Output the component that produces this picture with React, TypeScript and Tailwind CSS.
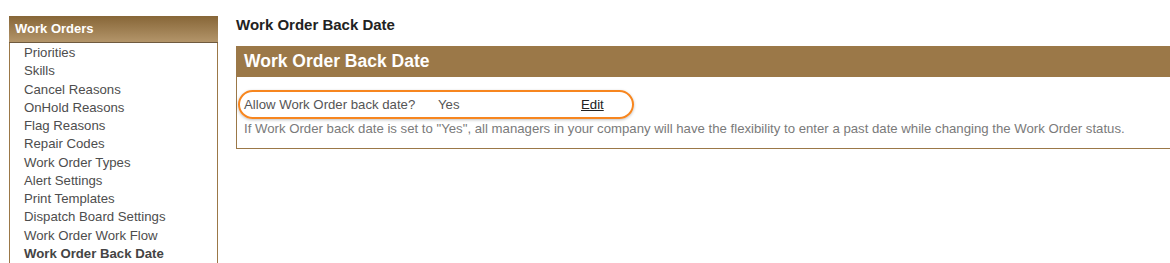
import React from 'react';

const menu = [
  'Priorities',
  'Skills',
  'Cancel Reasons',
  'OnHold Reasons',
  'Flag Reasons',
  'Repair Codes',
  'Work Order Types',
  'Alert Settings',
  'Print Templates',
  'Dispatch Board Settings',
  'Work Order Work Flow',
  'Work Order Back Date',
];

const active = 'Work Order Back Date';

export default function App() {
  return (
    <div
      className="flex w-[1170px] h-[263px] overflow-hidden bg-white pt-4 pl-[9px]"
      style={{ fontFamily: '"Liberation Sans", Arial, sans-serif' }}
    >
      {/* Sidebar */}
      <div className="w-[209px] shrink-0">
        <div className="h-[27px] flex items-center px-[6px] text-[13px] font-bold text-white bg-gradient-to-b from-[#876637] to-[#b3956a] border-b border-[#6f5a3e]">
          Work Orders
        </div>
        <ul className="border-x border-[#9b7848] pl-[14px] pt-[1px] h-[300px]">
          {menu.map(item => (
            <li
              key={item}
              className={`text-[13.2px] leading-[18.25px] ${item === active ? 'font-bold text-[#444]' : 'text-[#4d4d4d]'}`}
            >
              {item}
            </li>
          ))}
        </ul>
      </div>

      {/* Content */}
      <div className="flex-1 ml-[18px] min-w-0">
        <h1 className="text-[15px] leading-[17px] font-bold text-[#222] mb-[13px]">Work Order Back Date</h1>
        <div className="border-l border-b border-[#9b7848] -mr-4">
          <div className="h-[31px] flex items-center pl-[7px] bg-[#9b7848] text-white font-bold text-[17.5px]">
            Work Order Back Date
          </div>
          <div className="relative pl-[7px] pt-[19px] pb-[10px] text-[13.2px] leading-[18px]">
            <div className="flex text-[#555] mb-[6px]">
              <span className="w-[194px]">Allow Work Order back date?</span>
              <span className="w-[143px]">Yes</span>
              <a href="#" className="text-[#222] underline">Edit</a>
            </div>
            <p className="text-[#7a7a7a]">
              If Work Order back date is set to "Yes", all managers in your company will have the flexibility to enter a past date while changing the Work Order status.
            </p>
            {/* highlight annotation */}
            <div className="absolute left-[1px] top-[13px] w-[396px] h-[29px] rounded-full border-2 border-[#f7861f] shadow-[0_1px_3px_rgba(0,0,0,0.25)] pointer-events-none" />
          </div>
        </div>
      </div>
    </div>
  );
}
